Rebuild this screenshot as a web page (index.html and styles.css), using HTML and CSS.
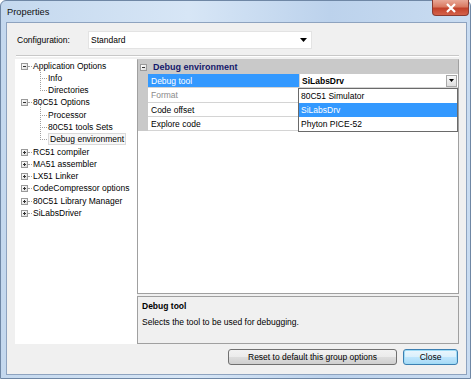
FILE: index.html
```html
<!DOCTYPE html>
<html lang="en">
<head>
    <meta charset="UTF-8">
    <title>Properties</title>
    <link rel="stylesheet" href="styles.css">
</head>
<body>
    <div class="window">
        <div class="titlebar">
            <span class="title">Properties</span>
            <div class="close-btn">
                <svg width="12" height="10" viewBox="0 0 12 10"><path d="M2 1 L10 9 M10 1 L2 9" stroke="#fff" stroke-width="2.2"/></svg>
            </div>
        </div>
        <div class="client">
            <div class="config-row">
                <span class="config-label">Configuration:</span>
                <div class="combo">
                    <span>Standard</span>
                    <svg class="combo-arrow" width="7" height="4" viewBox="0 0 7 4"><path d="M0 0 H7 L3.5 4 Z" fill="#000"/></svg>
                </div>
            </div>
            <div class="separator"></div>
            <div class="main">
                <ul class="tree">
                    <li class="node"><span class="expander minus"></span>Application Options</li>
                    <li class="leaf">Info</li>
                    <li class="leaf last">Directories</li>
                    <li class="node"><span class="expander minus"></span>80C51 Options</li>
                    <li class="leaf">Processor</li>
                    <li class="leaf">80C51 tools Sets</li>
                    <li class="leaf last"><span class="selected-item">Debug environment</span></li>
                    <li class="node"><span class="expander plus"></span>RC51 compiler</li>
                    <li class="node"><span class="expander plus"></span>MA51 assembler</li>
                    <li class="node"><span class="expander plus"></span>LX51 Linker</li>
                    <li class="node"><span class="expander plus"></span>CodeCompressor options</li>
                    <li class="node"><span class="expander plus"></span>80C51 Library Manager</li>
                    <li class="node"><span class="expander plus"></span>SiLabsDriver</li>
                </ul>
                <div class="right-pane">
                    <div class="grid">
                        <div class="grid-header"><span class="expander minus"></span>Debug environment</div>
                        <div class="grid-row">
                            <div class="margin"></div>
                            <div class="name selected">Debug tool</div>
                            <div class="value editing">
                                <span>SiLabsDrv</span>
                                <span class="drop-btn"><svg width="5" height="3" viewBox="0 0 5 3"><path d="M0 0 H5 L2.5 3 Z" fill="#000"/></svg></span>
                            </div>
                        </div>
                        <div class="grid-row">
                            <div class="margin"></div>
                            <div class="name disabled">Format</div>
                            <div class="value">80C51 Simulator</div>
                        </div>
                        <div class="grid-row">
                            <div class="margin"></div>
                            <div class="name">Code offset</div>
                            <div class="value">SiLabsDrv</div>
                        </div>
                        <div class="grid-row">
                            <div class="margin"></div>
                            <div class="name">Explore code</div>
                            <div class="value">Phyton PICE-52</div>
                        </div>
                        <ul class="dropdown">
                            <li>80C51 Simulator</li>
                            <li class="active">SiLabsDrv</li>
                            <li>Phyton PICE-52</li>
                        </ul>
                    </div>
                    <div class="desc">
                        <div class="desc-title">Debug tool</div>
                        <div class="desc-text">Selects the tool to be used for debugging.</div>
                    </div>
                </div>
            </div>
            <div class="buttons">
                <button class="btn reset">Reset to default this group options</button>
                <button class="btn close">Close</button>
            </div>
        </div>
    </div>
</body>
</html>
```
FILE: styles.css
```css
body {
    margin: 0;
    background: #ffffff;
    font-family: 'Liberation Sans', Arial, sans-serif;
    font-size: 8.5px;
    color: #000;
}
.window {
    width: 469px;
    height: 377px;
    border: 1px solid #6f87a5;
    border-radius: 6px 6px 0 0;
    background: linear-gradient(to right, #c4d8ee 0%, #d7e6f6 40%, #bcd2ec 70%, #c9dcf1 100%);
    display: flex;
    flex-direction: column;
}
.titlebar {
    height: 21px;
    display: flex;
    align-items: flex-start;
    justify-content: space-between;
    padding-left: 6px;
    padding-right: 1px;
}
.title {
    font-size: 9.3px;
    margin-top: 6px;
    color: #111;
}
.close-btn {
    width: 35px;
    height: 15px;
    margin-top: -1px;
    border: 1px solid #8a3b31;
    border-top: none;
    border-radius: 0 0 4px 4px;
    background: linear-gradient(to bottom, #e9a897 0%, #d97a62 45%, #c2412a 55%, #d4624a 100%);
    display: flex;
    align-items: center;
    justify-content: center;
}
.client {
    flex: 1;
    margin: 0 3px 3px 5px;
    border: 1px solid #8ea3bf;
    background: #f0f0f0;
    display: flex;
    flex-direction: column;
}
.config-row {
    display: flex;
    align-items: center;
    margin-top: 8px;
    padding-left: 10px;
}
.config-label {
    width: 71px;
}
.combo {
    width: 216px;
    height: 16px;
    background: #fff;
    border: 1px solid #e3e3e3;
    display: flex;
    align-items: center;
    justify-content: space-between;
    padding: 0 4px 0 2px;
}
.separator {
    margin: 6px 7px 0 9px;
    border-top: 1px solid #c8c8c8;
    border-bottom: 1px solid #ffffff;
}
.main {
    display: flex;
    margin: 2px 7px 0 8px;
    height: 285px;
}
.tree {
    list-style: none;
    margin: 0;
    padding: 0;
    width: 122px;
    height: 285px;
    background: #fff;
    box-sizing: border-box;
}
.tree li {
    position: relative;
    height: 12.3px;
    line-height: 12.3px;
    white-space: nowrap;
}
.tree li:first-child {
    margin-top: 0.5px;
}
.tree .node {
    padding-left: 18px;
}
.tree .node .expander {
    position: absolute;
    left: 6px;
    top: 3px;
}
.tree .node::after {
    content: '';
    position: absolute;
    left: 13px;
    top: 6px;
    width: 4px;
    border-top: 1px dotted #a0a0a0;
}
.tree .leaf {
    padding-left: 33px;
}
.tree .leaf::before {
    content: '';
    position: absolute;
    left: 25px;
    top: -6px;
    width: 6px;
    height: 12px;
    border-left: 1px dotted #a0a0a0;
    border-bottom: 1px dotted #a0a0a0;
}
.tree .leaf:not(.last)::after {
    content: '';
    position: absolute;
    left: 25px;
    top: 6px;
    height: 7px;
    border-left: 1px dotted #a0a0a0;
}
.selected-item {
    border: 1px solid #dadada;
    background: #f7f7f7;
    padding: 0 1px;
}
.expander {
    display: inline-block;
    width: 5px;
    height: 5px;
    border: 1px solid #9a9a9a;
    background: linear-gradient(135deg, #ffffff, #dcdcdc);
    position: relative;
}
.expander.minus::before,
.expander.plus::before {
    content: '';
    position: absolute;
    left: 1px;
    top: 2px;
    width: 3px;
    height: 1px;
    background: #333;
}
.expander.plus::after {
    content: '';
    position: absolute;
    left: 2px;
    top: 1px;
    width: 1px;
    height: 3px;
    background: #333;
}
.right-pane {
    flex: 1;
    display: flex;
    flex-direction: column;
    gap: 2px;
}
.grid {
    position: relative;
    height: 235px;
    border: 1px solid #a0a0a0;
    border-top-color: #c8c8c8;
    background: #fff;
}
.grid-header {
    height: 14px;
    background: #c9c9c9;
    display: flex;
    align-items: center;
    font-weight: bold;
    font-size: 9px;
    color: #15186b;
    padding-left: 2px;
}
.grid-header .expander {
    margin-right: 6px;
}
.grid-row {
    display: flex;
    height: 14.3px;
    line-height: 14px;
}
.margin {
    width: 10px;
    background: #c9c9c9;
}
.name {
    width: 148px;
    padding-left: 3px;
    border-right: 1px solid #d4d4d4;
    border-bottom: 1px solid #d4d4d4;
}
.name.selected {
    background: #3399ff;
    color: #fff;
}
.name.disabled {
    color: #8a8a8a;
}
.value {
    flex: 1;
    padding-left: 2px;
    border-bottom: 1px solid #d4d4d4;
}
.value.editing {
    display: flex;
    align-items: center;
    justify-content: space-between;
    font-weight: bold;
    padding-right: 1px;
}
.drop-btn {
    width: 9px;
    height: 10px;
    border: 1px solid #a8a8a8;
    background: linear-gradient(to bottom, #f8f8f8, #dedede);
    display: flex;
    align-items: center;
    justify-content: center;
}
.dropdown {
    list-style: none;
    margin: 0;
    padding: 0;
    position: absolute;
    left: 160px;
    top: 28px;
    width: 158px;
    background: #fff;
    border: 1px solid #6a6a6a;
}
.dropdown li {
    height: 14px;
    line-height: 14px;
    padding-left: 2px;
}
.dropdown li.active {
    background: #3399ff;
    color: #fff;
}
.desc {
    height: 42px;
    border: 1px solid #a0a0a0;
    background: #f0f0f0;
    padding: 2px 4px;
}
.desc-title {
    font-weight: bold;
    line-height: 12px;
    margin-top: 1px;
}
.desc-text {
    margin-top: 5px;
}
.buttons {
    display: flex;
    justify-content: flex-end;
    gap: 6px;
    margin: 5px 8px 0 0;
}
.btn {
    font-family: 'Liberation Sans', Arial, sans-serif;
    font-size: 8.5px;
    height: 16px;
    border: 1px solid #707070;
    border-radius: 3px;
    background: linear-gradient(to bottom, #f2f2f2 0%, #ebebeb 50%, #dddddd 51%, #cfcfcf 100%);
    padding: 0;
    color: #000;
}
.btn.reset {
    width: 169px;
}
.btn.close {
    width: 55px;
    border-color: #3c7fb1;
    box-shadow: inset 0 0 0 1px #9fdcf6;
    background: linear-gradient(to bottom, #eaf6fd 0%, #d9f0fc 50%, #bee6fd 51%, #a7d9f5 100%);
}
```
